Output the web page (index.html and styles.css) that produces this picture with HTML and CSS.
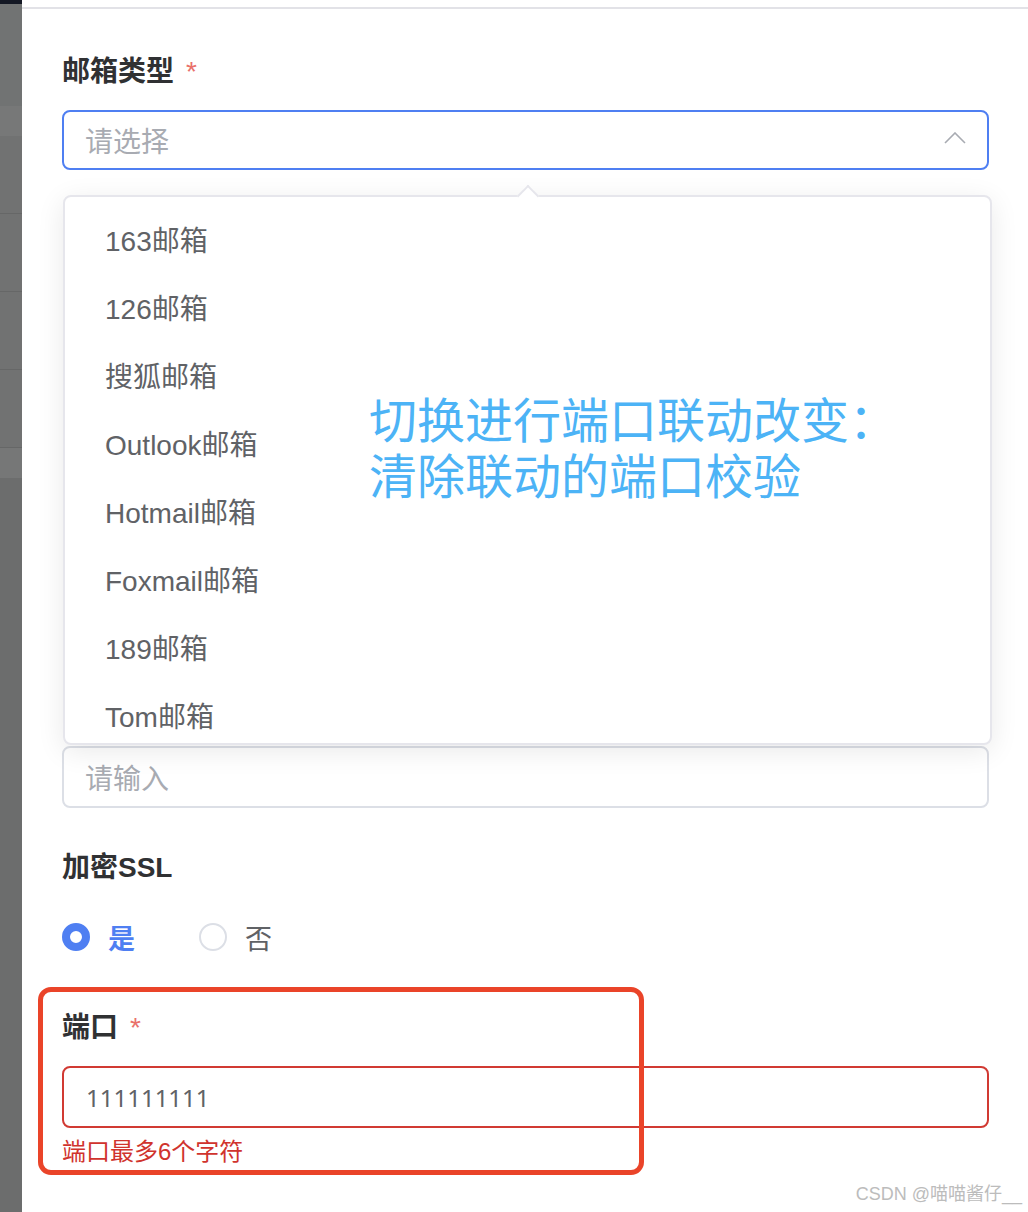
FILE: index.html
```html
<!DOCTYPE html>
<html lang="zh-CN">
<head>
<meta charset="utf-8">
<title>邮箱配置</title>
<link rel="stylesheet" href="styles.css">
</head>
<body>
<div class="page">
  <aside class="side">
    <div class="side-top"></div>
    <div class="side-a"></div>
    <div class="side-b"></div>
    <div class="side-c"></div>
    <div class="side-c"></div>
    <div class="side-c"></div>
    <div class="side-c"></div>
    <div class="side-d"></div>
    <div class="side-e"></div>
  </aside>
  <main class="main">
    <div class="topline"></div>
    <form class="form">
      <div class="item">
        <div class="label">邮箱类型<span class="req">*</span></div>
        <div class="select-wrap">
          <div class="control focus">
            <span class="placeholder">请选择</span>
            <svg class="chev" width="22" height="12" viewBox="0 0 22 12"><polyline points="1,11 11,1 21,11" fill="none" stroke="#a8abb2" stroke-width="1.6"/></svg>
          </div>
          <div class="dropdown">
            <div class="arrow"></div>
            <ul class="options">
              <li>163邮箱</li>
              <li>126邮箱</li>
              <li>搜狐邮箱</li>
              <li>Outlook邮箱</li>
              <li>Hotmail邮箱</li>
              <li>Foxmail邮箱</li>
              <li>189邮箱</li>
              <li>Tom邮箱</li>
            </ul>
          </div>
        </div>
      </div>
      <div class="covered"></div>
      <div class="item">
        <div class="control">
          <span class="placeholder">请输入</span>
        </div>
      </div>
      <div class="item">
        <div class="label">加密SSL</div>
        <div class="radios">
          <label class="radio checked"><span class="dot"></span><span class="rtext">是</span></label>
          <label class="radio"><span class="dot"></span><span class="rtext">否</span></label>
        </div>
      </div>
      <div class="item port">
        <div class="mark"></div>
        <div class="label">端口<span class="req">*</span></div>
        <div class="control error">
          <span class="value">111111111</span>
        </div>
        <div class="err">端口最多6个字符</div>
      </div>
    </form>
    <div class="note">切换进行端口联动改变：<br>清除联动的端口校验</div>
    <div class="watermark">CSDN @喵喵酱仔__</div>
  </main>
</div>
</body>
</html>
```
FILE: styles.css
```css
html, body {
  margin: 0;
  padding: 0;
  height: 1212px;
  overflow: hidden;
  background: #ffffff;
  font-family: "Liberation Sans", "Noto Sans CJK SC", sans-serif;
}
.page {
  display: flex;
  height: 1212px;
}
.side {
  width: 22px;
  flex: none;
  display: flex;
  flex-direction: column;
  background: #6c6d6d;
}
.side-top { height: 4px; background: #141824; }
.side-a { height: 102px; background: #717373; }
.side-b { height: 30px; background: #777878; }
.side-c { height: 77px; background: #717272; border-bottom: 1px solid #666767; }
.side-c:first-of-type { height: 74px; }
.side-d { height: 30px; background: #767777; }
.side-e { flex: 1; background: #6c6d6d; }

.main {
  flex: 1;
  position: relative;
  background: #fff;
}
.topline {
  height: 2px;
  margin-top: 7px;
  background: #e2e2e7;
}
.form {
  padding: 43px 39px 0 40px;
  margin: 0;
}
.item {
  margin-bottom: 40px;
  position: relative;
}
.label {
  font-size: 28px;
  line-height: 40px;
  height: 40px;
  font-weight: bold;
  color: #303133;
  margin-bottom: 18px;
}
.req {
  color: #e9706a;
  font-weight: normal;
  margin-left: 12px;
}
.select-wrap {
  position: relative;
}
.control {
  box-sizing: border-box;
  height: 62px;
  border: 2px solid #dcdfe6;
  border-radius: 8px;
  display: flex;
  align-items: center;
  padding: 0 22px 0 21px;
  font-size: 28px;
}
.control.focus {
  height: 60px;
  border-color: #4f7ff2;
}
.control.error {
  border-color: #d13a33;
}
.placeholder {
  color: #a8abb2;
  flex: 1;
}
.value {
  color: #606266;
  font-family: "Noto Sans", "Noto Sans CJK SC", sans-serif;
  font-size: 24px;
  padding-left: 1px;
}
.chev {
  margin-right: -1px;
  margin-top: -5px;
}
.dropdown {
  position: absolute;
  top: 85px;
  left: 1px;
  width: 929px;
  height: 550px;
  box-sizing: border-box;
  background: #fff;
  border: 2px solid #e6e6ec;
  border-radius: 8px;
  box-shadow: 0 6px 28px rgba(0, 0, 0, 0.09);
  z-index: 5;
}
.arrow {
  position: absolute;
  top: -9px;
  left: 455px;
  width: 14px;
  height: 14px;
  background: #fff;
  border-top: 2px solid #e6e6ec;
  border-left: 2px solid #e6e6ec;
  transform: rotate(45deg);
}
.options {
  list-style: none;
  margin: 0;
  padding: 11px 0 0;
  height: 546px;
  overflow: hidden;
  border-radius: 8px;
}
.options li {
  height: 68px;
  line-height: 68px;
  padding-left: 40px;
  font-size: 28px;
  color: #606266;
}
.covered {
  height: 536px;
}
.radios {
  display: flex;
  align-items: center;
  height: 62px;
}
.radio {
  display: flex;
  align-items: center;
  margin-right: 64px;
}
.dot {
  box-sizing: border-box;
  width: 28px;
  height: 28px;
  border-radius: 50%;
  border: 2px solid #dcdfe6;
  background: #fff;
}
.radio.checked .dot {
  border: 8px solid #4f7ff2;
}
.rtext {
  margin-left: 18px;
  font-size: 27px;
  color: #606266;
}
.radio.checked .rtext {
  color: #4f7ff2;
  font-weight: bold;
}
.port {
  margin-bottom: 0;
}
.mark {
  position: absolute;
  top: -21px;
  left: -24px;
  width: 606px;
  height: 188px;
  box-sizing: border-box;
  border: 5px solid #ea4429;
  border-radius: 13px;
  z-index: 3;
}
.err {
  font-size: 24px;
  line-height: 38px;
  padding-top: 5px;
  color: #d0332d;
}
.note {
  position: absolute;
  left: 347px;
  top: 389px;
  z-index: 6;
  font-size: 48px;
  line-height: 56px;
  color: #4cb3f6;
  font-family: "Noto Sans CJK SC", sans-serif;
}
.watermark {
  position: absolute;
  right: 6px;
  bottom: 6px;
  font-size: 18px;
  line-height: 24px;
  color: #bcbcbc;
}
```
